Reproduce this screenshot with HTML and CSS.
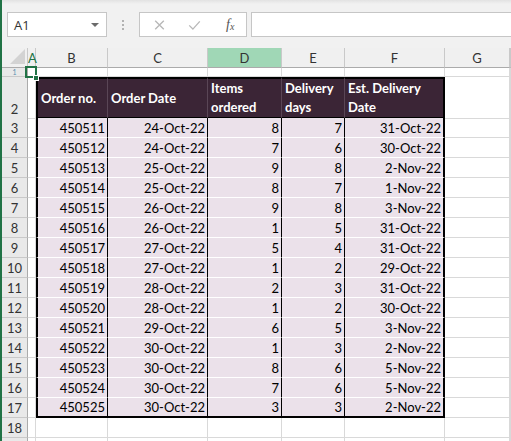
FILE: index.html
```html
<!DOCTYPE html>
<html lang="en">
  <head>
    <meta charset="UTF-8" />
    <title>Delivery dates</title>
    <link rel="stylesheet" href="styles.css">
  </head>
  <body>
    <div class="formula-bar">
      <div class="name-box">
        <span>A1</span>
        <span class="caret"></span>
      </div>
      <div class="grip"><i></i><i></i><i></i></div>
      <div class="buttons">
        <svg class="btn-icon" viewBox="0 0 14 14">
          <path d="M2 2L12 12M12 2L2 12"></path>
        </svg>
        <svg class="btn-icon" viewBox="0 0 16 14">
          <path d="M1.5 7.5L6 12L14.5 2.5"></path>
        </svg>
        <span class="fx">f<sub>x</sub></span>
      </div>
      <div class="formula-input"></div>
    </div>

    <div class="sheet">
      <div class="row col-heads">
        <div class="corner"><span class="tri"></span></div>
        <div class="ch active">A</div>
        <div class="ch">B</div>
        <div class="ch">C</div>
        <div class="ch hl">D</div>
        <div class="ch">E</div>
        <div class="ch">F</div>
        <div class="ch">G</div>
        <div class="ch"></div>
      </div>

      <div class="row r1">
        <div class="rh active">1</div>
        <div class="c selected"><span class="sel"></span><span class="handle"></span></div>
        <div class="c"></div><div class="c"></div><div class="c"></div><div class="c"></div><div class="c"></div><div class="c"></div><div class="c"></div>
      </div>

      <div class="row r2">
        <div class="rh">2</div>
        <div class="c"></div>
        <div class="th first">Order no.</div>
        <div class="th">Order Date</div>
        <div class="th">Items ordered</div>
        <div class="th">Delivery days</div>
        <div class="th last">Est. Delivery Date</div>
        <div class="c"></div><div class="c"></div>
      </div>

      <div class="row"><div class="rh">3</div><div class="c"></div><div class="td first">450511</div><div class="td">24-Oct-22</div><div class="td">8</div><div class="td">7</div><div class="td last">31-Oct-22</div><div class="c"></div><div class="c"></div></div>
      <div class="row"><div class="rh">4</div><div class="c"></div><div class="td first">450512</div><div class="td">24-Oct-22</div><div class="td">7</div><div class="td">6</div><div class="td last">30-Oct-22</div><div class="c"></div><div class="c"></div></div>
      <div class="row"><div class="rh">5</div><div class="c"></div><div class="td first">450513</div><div class="td">25-Oct-22</div><div class="td">9</div><div class="td">8</div><div class="td last">2-Nov-22</div><div class="c"></div><div class="c"></div></div>
      <div class="row"><div class="rh">6</div><div class="c"></div><div class="td first">450514</div><div class="td">25-Oct-22</div><div class="td">8</div><div class="td">7</div><div class="td last">1-Nov-22</div><div class="c"></div><div class="c"></div></div>
      <div class="row"><div class="rh">7</div><div class="c"></div><div class="td first">450515</div><div class="td">26-Oct-22</div><div class="td">9</div><div class="td">8</div><div class="td last">3-Nov-22</div><div class="c"></div><div class="c"></div></div>
      <div class="row"><div class="rh">8</div><div class="c"></div><div class="td first">450516</div><div class="td">26-Oct-22</div><div class="td">1</div><div class="td">5</div><div class="td last">31-Oct-22</div><div class="c"></div><div class="c"></div></div>
      <div class="row"><div class="rh">9</div><div class="c"></div><div class="td first">450517</div><div class="td">27-Oct-22</div><div class="td">5</div><div class="td">4</div><div class="td last">31-Oct-22</div><div class="c"></div><div class="c"></div></div>
      <div class="row"><div class="rh">10</div><div class="c"></div><div class="td first">450518</div><div class="td">27-Oct-22</div><div class="td">1</div><div class="td">2</div><div class="td last">29-Oct-22</div><div class="c"></div><div class="c"></div></div>
      <div class="row"><div class="rh">11</div><div class="c"></div><div class="td first">450519</div><div class="td">28-Oct-22</div><div class="td">2</div><div class="td">3</div><div class="td last">31-Oct-22</div><div class="c"></div><div class="c"></div></div>
      <div class="row"><div class="rh">12</div><div class="c"></div><div class="td first">450520</div><div class="td">28-Oct-22</div><div class="td">1</div><div class="td">2</div><div class="td last">30-Oct-22</div><div class="c"></div><div class="c"></div></div>
      <div class="row"><div class="rh">13</div><div class="c"></div><div class="td first">450521</div><div class="td">29-Oct-22</div><div class="td">6</div><div class="td">5</div><div class="td last">3-Nov-22</div><div class="c"></div><div class="c"></div></div>
      <div class="row"><div class="rh">14</div><div class="c"></div><div class="td first">450522</div><div class="td">30-Oct-22</div><div class="td">1</div><div class="td">3</div><div class="td last">2-Nov-22</div><div class="c"></div><div class="c"></div></div>
      <div class="row"><div class="rh">15</div><div class="c"></div><div class="td first">450523</div><div class="td">30-Oct-22</div><div class="td">8</div><div class="td">6</div><div class="td last">5-Nov-22</div><div class="c"></div><div class="c"></div></div>
      <div class="row"><div class="rh">16</div><div class="c"></div><div class="td first">450524</div><div class="td">30-Oct-22</div><div class="td">7</div><div class="td">6</div><div class="td last">5-Nov-22</div><div class="c"></div><div class="c"></div></div>
      <div class="row bottom"><div class="rh">17</div><div class="c"></div><div class="td first">450525</div><div class="td">30-Oct-22</div><div class="td">3</div><div class="td">3</div><div class="td last">2-Nov-22</div><div class="c"></div><div class="c"></div></div>
      <div class="row"><div class="rh">18</div><div class="c"></div><div class="c"></div><div class="c"></div><div class="c"></div><div class="c"></div><div class="c"></div><div class="c"></div><div class="c"></div></div>
      <div class="row"><div class="rh"></div><div class="c"></div><div class="c"></div><div class="c"></div><div class="c"></div><div class="c"></div><div class="c"></div><div class="c"></div><div class="c"></div></div>
    </div>
  </body>
</html>
```

FILE: styles.css
```css
* {
  margin: 0;
  padding: 0;
  box-sizing: border-box;
}

body {
  width: 511px;
  height: 441px;
  overflow: hidden;
  background: #ffffff;
  border-left: 2px solid #217346;
  font-family: Lato, "Open Sans", sans-serif;
  font-size: 13px;
  color: #000000;
}

/* formula bar */

.formula-bar {
  height: 48px;
  display: flex;
  align-items: flex-start;
  padding: 12px 0 0 5px;
  background: linear-gradient(#e2e2e2 0, #f1f1f1 4px, #f1f1f1 100%);
}

.name-box {
  width: 100px;
  height: 25px;
  display: flex;
  align-items: center;
  justify-content: space-between;
  padding: 0 7px 0 6px;
  background: #ffffff;
  border: 1px solid #c6c6c6;
  font-family: "Open Sans", sans-serif;
  font-size: 13px;
  color: #333333;
}

.caret {
  width: 0;
  height: 0;
  border-left: 4px solid transparent;
  border-right: 4px solid transparent;
  border-top: 4px solid #6b6b6b;
}

.grip {
  width: 32px;
  height: 25px;
  display: flex;
  flex-direction: column;
  align-items: center;
  justify-content: center;
  gap: 2px;
}

.grip i {
  width: 2px;
  height: 2px;
  background: #b2b2b2;
}

.buttons {
  width: 108px;
  height: 25px;
  display: flex;
  align-items: center;
  padding-left: 13px;
  gap: 22px;
  background: #ffffff;
  border: 1px solid #c6c6c6;
}

.btn-icon {
  width: 13px;
  height: 12px;
  fill: none;
  stroke: #b8b8b8;
  stroke-width: 1.6;
}

.fx {
  font-family: "Liberation Serif", serif;
  font-style: italic;
  font-size: 14px;
  color: #555555;
  margin-left: 3px;
}

.fx sub {
  font-size: 10px;
  vertical-align: -1px;
}

.formula-input {
  flex: 1;
  height: 25px;
  margin-left: 4px;
  background: #ffffff;
  border: 1px solid #c6c6c6;
  border-right: none;
}

/* grid */

.row {
  display: grid;
  grid-template-columns: 26px 8px 72px 100px 74px 63px 100px 65px 1fr;
  height: 20px;
}

.row > div {
  border-right: 1px solid #d9d9d9;
  border-bottom: 1px solid #d9d9d9;
}

.col-heads {
  background: #f0f0f0;
}

.col-heads > div {
  border-right: 1px solid #c9c9c9;
  border-bottom: 1px solid #ababab;
}

.ch {
  display: flex;
  align-items: center;
  justify-content: center;
  color: #333333;
  font-size: 13px;
  padding-top: 1px;
}

.ch.active {
  color: #217346;
  justify-content: flex-start;
  padding-left: 0;
}

.ch.hl {
  background: #a0d7b6;
}

.corner {
  position: relative;
}

.tri {
  position: absolute;
  right: 2px;
  bottom: 3px;
  width: 0;
  height: 0;
  border-left: 15px solid transparent;
  border-bottom: 15px solid #d3d3d3;
}

.rh {
  display: flex;
  align-items: flex-end;
  justify-content: center;
  padding-bottom: 1px;
  background: #e9e9e9;
  color: #333333;
  overflow: hidden;
}

.row > .rh {
  border-right: 1px solid #ababab;
  border-bottom: 1px solid #c9c9c9;
}

.r1 {
  height: 9px;
}

.r1 .rh {
  align-items: center;
  padding-bottom: 0;
  font-size: 7px;
  line-height: 7px;
  color: #5a8fb0;
}

.selected {
  position: relative;
}

.sel {
  position: absolute;
  left: -3px;
  top: -2px;
  width: 12px;
  height: 12px;
  border: 2px solid #217346;
  z-index: 2;
}

.handle {
  position: absolute;
  left: 5px;
  top: 7px;
  width: 6px;
  height: 6px;
  background: #217346;
  border: 1px solid #ffffff;
  z-index: 3;
}

.r2 {
  height: 41px;
}

.row > .th {
  display: flex;
  align-items: center;
  padding: 0 6px 0 3px;
  background: #3b2536;
  color: #ffffff;
  font-weight: bold;
  line-height: 19px;
  border-top: 2px solid #000000;
  border-right: 1px solid #5a4656;
  border-bottom: 2px solid #000000;
}

.row > .td {
  display: flex;
  align-items: center;
  justify-content: flex-end;
  padding: 0 2px 0 0;
  background: #ebe1ea;
  border-right: 1px solid #000000;
  border-bottom: 1px solid #ffffff;
}

.row > .first {
  border-left: 2px solid #000000;
}

.row > .last {
  border-right: 2px solid #000000;
}

.bottom > .td {
  border-bottom: 2px solid #000000;
}
```
